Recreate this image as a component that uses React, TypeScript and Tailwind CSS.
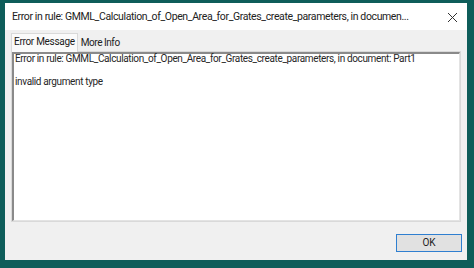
export default function App() {
  return (
    <div className="flex h-[268px] w-[474px] bg-[#0e5d5a] pb-[8px] pl-[5px] pr-[7px] pt-[3px] font-['Roboto',sans-serif] text-[#1a1a1a]">
      <div className="flex flex-1 flex-col bg-[#f0f0f0]">
        {/* title bar */}
        <div className="flex h-[27px] items-center justify-between bg-white pb-[1px] pl-[7px] pr-[8px] pt-[2px]">
          <span className="whitespace-nowrap text-[10.5px] tracking-[-0.38px] text-[#222]">
            Error in rule: GMML_Calculation_of_Open_Area_for_Grates_create_parameters, in documen...
          </span>
          <svg width="11" height="11" viewBox="0 0 11 11" className="mr-[1px]">
            <path d="M1 1L10 10M10 1L1 10" stroke="#333" strokeWidth="1" />
          </svg>
        </div>

        <div className="flex flex-1 flex-col px-[6px] pt-[2px]">
          {/* tabs */}
          <div className="flex items-end whitespace-nowrap text-[10px] tracking-[-0.3px]">
            <div className="relative z-10 -mb-px border border-b-0 border-[#d9d9d9] bg-[#fafafa] px-[2px] pb-[3px] pt-[0px]">
              Error Message
            </div>
            <div className="px-[3px] pb-[1px] pt-[3px] tracking-[-0.45px] text-[#222]">More Info</div>
          </div>

          {/* tab page */}
          <div className="flex h-[171px] border border-[#d9d9d9] bg-[#fafafa]">
            <div className="flex-1 whitespace-nowrap border-b border-l-[2px] border-r border-t-[2px] border-b-[#e3e3e3] border-l-[#8a8a8a] border-r-[#e3e3e3] border-t-[#8a8a8a] bg-white px-[1px] text-[10px] leading-[10px] tracking-[-0.36px] text-[#262626]">
              <div>Error in rule: GMML_Calculation_of_Open_Area_for_Grates_create_parameters, in document: Part1</div>
              <div className="mt-[13px]">invalid argument type</div>
            </div>
          </div>

          {/* footer */}
          <div className="flex flex-1 items-center justify-end pt-[3px]">
            <button className="mr-[-1px] h-[18px] w-[66px] border border-[#2f7fd0] bg-[#e1e1e1] text-[10px] text-[#222] outline outline-1 -outline-offset-2 outline-[#e1e1e1]">
              OK
            </button>
          </div>
        </div>
      </div>
    </div>
  );
}
